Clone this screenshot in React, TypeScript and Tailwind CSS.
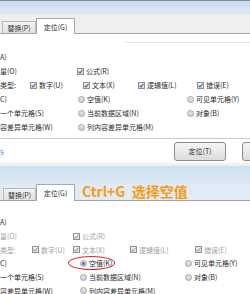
import React from "react";

type ItemProps = {
  kind: "check" | "radio";
  label: string;
  disabled?: boolean;
  checked?: boolean;
};

const CheckBox = ({ disabled }: { disabled?: boolean }) => (
  <span className="flex h-[7px] w-[7px] shrink-0 items-center justify-center border border-[#8e8f8f] bg-gradient-to-b from-[#f4f4f4] to-[#dcdcdc]">
    <svg width="5" height="5" viewBox="0 0 5 5">
      <path
        d="M0.6 2.6 L2 4 L4.5 0.8"
        fill="none"
        stroke={disabled ? "#a8a8a8" : "#3b5ea8"}
        strokeWidth="1.1"
      />
    </svg>
  </span>
);

const RadioDot = ({ checked }: { checked?: boolean }) => (
  <span className="flex h-[7px] w-[7px] shrink-0 items-center justify-center rounded-full border border-[#a4a4a4] bg-gradient-to-b from-[#e6e6e6] to-[#cfcfcf]">
    {checked && <span className="h-[3px] w-[3px] rounded-full bg-[#2f6fc4]" />}
  </span>
);

const Item = ({ kind, label, disabled, checked }: ItemProps) => (
  <span className="flex items-center gap-[2px] whitespace-nowrap">
    {kind === "check" ? <CheckBox disabled={disabled} /> : <RadioDot checked={checked} />}
    <span className={disabled ? "text-[#a2a2a2]" : "text-[#2a2a2a]"}>{label}</span>
  </span>
);

const App: React.FC = () => {
  return (
    <div
      className="relative h-[294px] w-[250px] overflow-hidden bg-white text-[7px] leading-[8px] text-[#2a2a2a]"
      style={{ fontFamily: '"Noto Sans CJK SC", "Noto Sans", sans-serif' }}
    >
      {/* first screenshot */}
      <div className="h-[1px] bg-[#8a8a8a]" />
      <div className="h-[14px] bg-gradient-to-b from-[#c9dbee] to-[#e2ebf5]" />
      <div className="flex h-[19px] items-end border-b border-[#a3a3a3] bg-[#efefef] pl-[2px]">
        <div className="flex h-[12px] w-[34px] items-center justify-center border border-b-0 border-[#b8b8b8] bg-gradient-to-b from-[#f3f3f3] to-[#e1e1e1] text-[#333]">
          替换(P)
        </div>
        <div className="-mb-[1px] flex h-[16px] w-[39px] items-center justify-center border border-b-0 border-[#a9a9a9] bg-white">
          定位(G)
        </div>
      </div>
      <div className="mt-[8px] ml-[125px] h-[1px] bg-[#e3e3e3]" />

      <div className="mt-[7px] flex flex-col">
        <div className="flex h-[14px] items-center">
          <span className="shrink-0">A)</span>
        </div>
        <div className="flex h-[14px] items-center">
          <span className="w-[77px] shrink-0">量(O)</span>
          <Item kind="check" label="公式(R)" />
        </div>
        <div className="flex h-[14px] items-center">
          <span className="w-[30px] shrink-0">类型:</span>
          <span className="w-[53px] shrink-0"><Item kind="check" label="数字(U)" /></span>
          <span className="w-[55px] shrink-0"><Item kind="check" label="文本(X)" /></span>
          <span className="w-[59px] shrink-0"><Item kind="check" label="逻辑值(L)" /></span>
          <Item kind="check" label="错误(E)" />
        </div>
        <div className="flex h-[14px] items-center">
          <span className="w-[78px] shrink-0">C)</span>
          <span className="w-[109px] shrink-0"><Item kind="radio" label="空值(K)" /></span>
          <Item kind="radio" label="可见单元格(Y)" />
        </div>
        <div className="flex h-[14px] items-center">
          <span className="w-[78px] shrink-0">一个单元格(S)</span>
          <span className="w-[109px] shrink-0"><Item kind="radio" label="当前数据区域(N)" /></span>
          <Item kind="radio" label="对象(B)" />
        </div>
        <div className="flex h-[14px] items-center">
          <span className="w-[78px] shrink-0">容差异单元格(W)</span>
          <Item kind="radio" label="列内容差异单元格(M)" />
        </div>
      </div>

      <div className="mt-[4px] h-[1px] bg-[#c9c9c9]" />
      <div className="flex h-[24px] items-center bg-white">
        <span className="mt-[2px] w-[174px] shrink-0 text-[#3c7fd0]">5</span>
        <div className="flex h-[19px] w-[52px] shrink-0 items-center justify-center rounded-[3px] border border-[#8c8c8c] bg-gradient-to-b from-[#f5f5f5] to-[#dddddd]">
          定位(T)
        </div>
        <div className="ml-[16px] h-[19px] w-[20px] shrink-0 rounded-[3px] border border-[#8c8c8c] bg-gradient-to-b from-[#f5f5f5] to-[#dddddd]" />
      </div>
      <div className="h-[3px] bg-[#efefef]" />

      {/* second screenshot */}
      <div className="h-[17px] bg-gradient-to-b from-[#cddff0] to-[#dde8f4]" />
      <div className="flex h-[18px] items-end border-b border-[#a3a3a3] bg-[#e1ebf5] pl-[3px]">
        <div className="flex h-[12px] w-[33px] items-center justify-center border border-b-0 border-[#b8b8b8] bg-gradient-to-b from-[#f3f3f3] to-[#e1e1e1] text-[#333]">
          替换(P)
        </div>
        <div className="-mb-[1px] flex h-[17px] w-[39px] items-center justify-center border border-b-0 border-[#a9a9a9] bg-white">
          定位(G)
        </div>
        <div
          className="mb-[1px] ml-[7px] whitespace-nowrap text-[14px] font-bold leading-[16px] text-[#f59b17]"
          style={{ fontFamily: '"Noto Sans CJK SC", sans-serif' }}
        >
          Ctrl+G&nbsp;&nbsp;选择空值
        </div>
      </div>

      <div className="mt-[14px] flex flex-col">
        <div className="flex h-[14px] items-center">
          <span className="shrink-0">A)</span>
        </div>
        <div className="flex h-[14px] items-center text-[#a2a2a2]">
          <span className="w-[73px] shrink-0">量(O)</span>
          <Item kind="check" label="公式(R)" disabled />
        </div>
        <div className="flex h-[13px] items-center text-[#a2a2a2]">
          <span className="w-[32px] shrink-0">类型:</span>
          <span className="w-[41px] shrink-0"><Item kind="check" label="数字(U)" disabled /></span>
          <span className="w-[57px] shrink-0"><Item kind="check" label="文本(X)" disabled /></span>
          <span className="w-[65px] shrink-0"><Item kind="check" label="逻辑值(L)" disabled /></span>
          <Item kind="check" label="错误(E)" disabled />
        </div>
        <div className="relative flex h-[14px] items-center">
          <span className="w-[80px] shrink-0">C)</span>
          <span className="w-[105px] shrink-0"><Item kind="radio" label="空值(K)" checked /></span>
          <Item kind="radio" label="可见单元格(Y)" />
          <span className="absolute left-[68px] top-[0px] h-[14px] w-[47px] rounded-[50%] border-[1.5px] border-[#cf2a30]" />
        </div>
        <div className="flex h-[14px] items-center">
          <span className="w-[80px] shrink-0">一个单元格(S)</span>
          <span className="w-[105px] shrink-0"><Item kind="radio" label="当前数据区域(N)" /></span>
          <Item kind="radio" label="对象(B)" />
        </div>
        <div className="flex h-[13px] items-center">
          <span className="w-[80px] shrink-0">容差异单元格(W)</span>
          <Item kind="radio" label="列内容差异单元格(M)" />
        </div>
      </div>
    </div>
  );
};

export default App;
